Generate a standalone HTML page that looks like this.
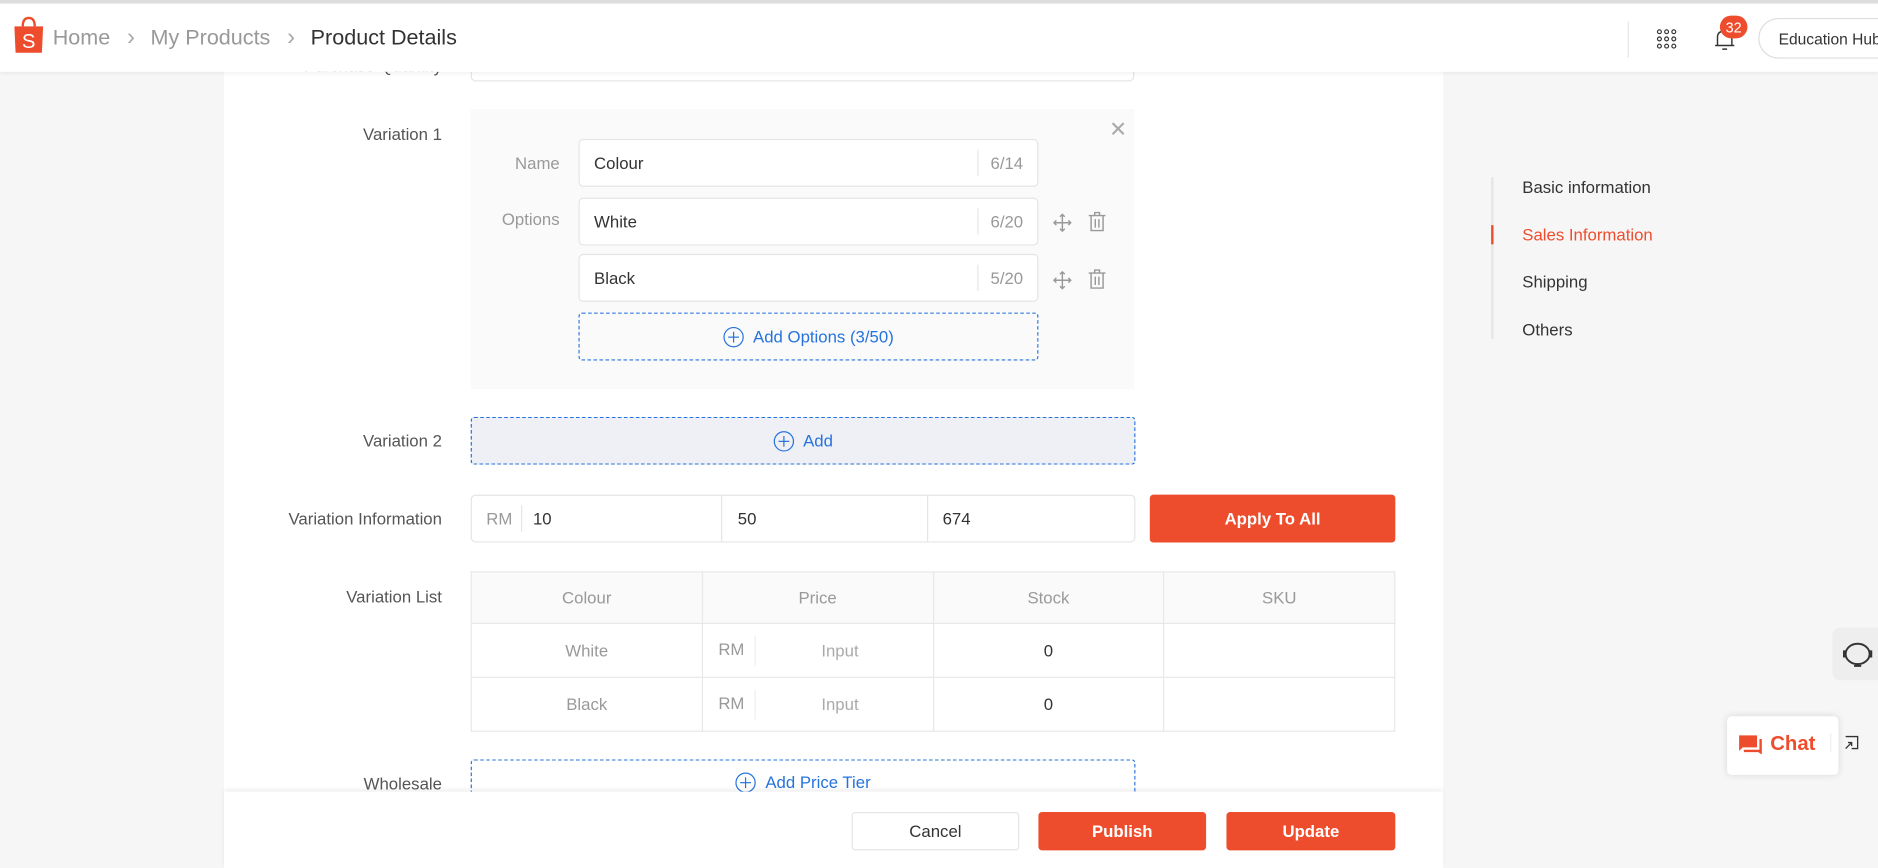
<!DOCTYPE html>
<html><head><meta charset="utf-8">
<style>
*{box-sizing:border-box;margin:0;padding:0}
html,body{width:1878px;height:868px;overflow:hidden;background:#f6f6f6;font-family:"Liberation Sans",sans-serif}
#s{position:absolute;left:0;top:0;width:1568px;height:725px;transform:scale(1.19770);transform-origin:0 0;background:#f6f6f6}
.a{position:absolute}
.lbl{position:absolute;right:1199px;font-size:14px;color:#555;text-align:right;white-space:nowrap}
.inp{position:absolute;background:#fff;border:1px solid #e5e5e5;border-radius:4px;font-size:14px;color:#333}
.dash{position:absolute;border:1px dashed #2673dd;border-radius:3px;color:#2673dd;font-size:14px;display:flex;align-items:center;justify-content:center;gap:8px}
.plus{width:17px;height:17px;border:1.3px solid #2673dd;border-radius:50%;position:relative}
.plus:before{content:"";position:absolute;left:3px;right:3px;top:7px;height:1.3px;background:#2673dd}
.plus:after{content:"";position:absolute;top:3px;bottom:3px;left:7px;width:1.3px;background:#2673dd}
.btn{position:absolute;border-radius:3px;font-size:14px;font-weight:bold;display:flex;align-items:center;justify-content:center;color:#fff;background:#ee4d2d}
td,th{border:1px solid #e8e8e8;font-weight:normal;font-size:14px;color:#999;text-align:center}
.sep{margin:0 13px 0 14px;color:#aaa;font-size:20px;line-height:18px}
</style></head><body><div id="s">
<div class="a" style="left:0;top:0;width:1568px;height:60px;background:#fff;border-top:3px solid #ddd;box-shadow:0 1px 4px rgba(0,0,0,.08);z-index:5">
 <svg class="a" style="left:12px;top:10px" width="24" height="32" viewBox="0 0 24 32"><path d="M7 9 Q7 2 12 2 Q17 2 17 9" fill="none" stroke="#ee4d2d" stroke-width="2"/><path d="M0 9 H24 L23 31 H1 Z" fill="#ee4d2d"/><text x="12" y="27" fill="#fff" font-size="17" text-anchor="middle" font-family="Liberation Sans">S</text></svg>
 <div class="a" style="left:44px;top:18px;font-size:18px;color:#999;white-space:nowrap">Home<span class="sep">›</span>My Products<span class="sep">›</span><span style="color:#333">Product Details</span></div>
 <div class="a" style="left:1359px;top:15px;width:1px;height:30px;background:#e5e5e5"></div>
 <svg class="a" style="left:1383px;top:21px" width="17" height="17"><g fill="none" stroke="#333" stroke-width="1"><circle cx="2.5" cy="2.5" r="1.6"/><circle cx="8.5" cy="2.5" r="1.6"/><circle cx="14.5" cy="2.5" r="1.6"/><circle cx="2.5" cy="8.5" r="1.6"/><circle cx="8.5" cy="8.5" r="1.6"/><circle cx="14.5" cy="8.5" r="1.6"/><circle cx="2.5" cy="14.5" r="1.6"/><circle cx="8.5" cy="14.5" r="1.6"/><circle cx="14.5" cy="14.5" r="1.6"/></g></svg>
 <svg class="a" style="left:1431px;top:20px" width="18" height="20"><path d="M3 15 V8 Q3 3 9 3 Q15 3 15 8 V15 H1 H17 M7 18 H11" fill="none" stroke="#333" stroke-width="1.2"/></svg>
 <div class="a" style="left:1436px;top:10px;height:19px;min-width:23px;border-radius:10px;background:#ee4d2d;color:#fff;font-size:12px;display:flex;align-items:center;justify-content:center;padding:0 4px">32</div>
 <div class="a" style="left:1468px;top:12px;width:130px;height:34px;border:1px solid #ddd;border-radius:17px;font-size:13px;color:#333;padding:9px 16px">Education Hub</div>
</div>
<div class="a" style="left:187px;top:0;width:1018px;height:725px;background:#fff"></div>
<div class="lbl" style="top:47px">Purchase Quantity</div>
<div class="inp" style="left:393px;top:30px;width:554px;height:38px"></div>

<div class="lbl" style="top:104px">Variation 1</div>
<div class="a" style="left:393px;top:91px;width:554px;height:234px;background:#fafafa"></div>
<div class="a" style="left:926px;top:98px;font-size:18px;color:#aaa">✕</div>
<div class="a" style="left:430px;top:128px;font-size:14px;color:#999">Name</div>
<div class="a" style="left:419px;top:175px;font-size:14px;color:#999">Options</div>
<div class="inp" style="left:483px;top:116px;width:384px;height:40px"><span class="a" style="left:12px;top:11px">Colour</span><span class="a" style="left:332px;top:8px;height:22px;border-left:1px solid #e5e5e5"></span><span class="a" style="left:343px;top:11px;color:#999">6/14</span></div>
<div class="inp" style="left:483px;top:165px;width:384px;height:40px"><span class="a" style="left:12px;top:11px">White</span><span class="a" style="left:332px;top:8px;height:22px;border-left:1px solid #e5e5e5"></span><span class="a" style="left:343px;top:11px;color:#999">6/20</span></div>
<div class="inp" style="left:483px;top:212px;width:384px;height:40px"><span class="a" style="left:12px;top:11px">Black</span><span class="a" style="left:332px;top:8px;height:22px;border-left:1px solid #e5e5e5"></span><span class="a" style="left:343px;top:11px;color:#999">5/20</span></div>
<svg class="a" style="left:879px;top:178px" width="16" height="16"><path d="M8 1V15M1 8H15M6 3L8 1L10 3M6 13L8 15L10 13M3 6L1 8L3 10M13 6L15 8L13 10" fill="none" stroke="#999" stroke-width="1.2"/></svg>
<svg class="a" style="left:879px;top:226px" width="16" height="16"><path d="M8 1V15M1 8H15M6 3L8 1L10 3M6 13L8 15L10 13M3 6L1 8L3 10M13 6L15 8L13 10" fill="none" stroke="#999" stroke-width="1.2"/></svg>
<svg class="a" style="left:908px;top:176px" width="16" height="18"><path d="M1 4H15M6 4V1.5H10V4M3 4V16.5H13V4M6.5 7V14M9.5 7V14" fill="none" stroke="#999" stroke-width="1.2"/></svg>
<svg class="a" style="left:908px;top:224px" width="16" height="18"><path d="M1 4H15M6 4V1.5H10V4M3 4V16.5H13V4M6.5 7V14M9.5 7V14" fill="none" stroke="#999" stroke-width="1.2"/></svg>
<div class="dash" style="left:483px;top:261px;width:384px;height:40px"><span class="plus"></span>Add Options (3/50)</div>

<div class="lbl" style="top:360px">Variation 2</div>
<div class="dash" style="left:393px;top:348px;width:555px;height:40px;background:#eef0f5"><span class="plus"></span>Add</div>

<div class="lbl" style="top:425px">Variation Information</div>
<div class="inp" style="left:393px;top:413px;width:555px;height:40px;font-size:14px">
 <span class="a" style="left:12px;top:11px;color:#999">RM</span><span class="a" style="left:41px;top:8px;height:22px;border-left:1px solid #e5e5e5"></span><span class="a" style="left:51px;top:11px">10</span>
 <span class="a" style="left:208px;top:0;height:38px;border-left:1px solid #e5e5e5"></span><span class="a" style="left:222px;top:11px">50</span>
 <span class="a" style="left:380px;top:0;height:38px;border-left:1px solid #e5e5e5"></span><span class="a" style="left:393px;top:11px">674</span>
</div>
<div class="btn" style="left:960px;top:413px;width:205px;height:40px">Apply To All</div>

<div class="lbl" style="top:490px">Variation List</div>
<table class="a" style="left:393px;top:477px;width:772px;border-collapse:collapse;table-layout:fixed">
<tr style="height:43px;background:#fafafa"><th>Colour</th><th>Price</th><th>Stock</th><th>SKU</th></tr>
<tr style="height:45px"><td>White</td><td style="position:relative"><span class="a" style="left:13px;top:13px">RM</span><span class="a" style="left:43px;top:10px;height:25px;border-left:1px solid #eee"></span><span class="a" style="left:99px;top:14px;color:#aaa">Input</span></td><td style="color:#333">0</td><td></td></tr>
<tr style="height:45px"><td>Black</td><td style="position:relative"><span class="a" style="left:13px;top:13px">RM</span><span class="a" style="left:43px;top:10px;height:25px;border-left:1px solid #eee"></span><span class="a" style="left:99px;top:14px;color:#aaa">Input</span></td><td style="color:#333">0</td><td></td></tr>
</table>

<div class="lbl" style="top:646px">Wholesale</div>
<div class="dash" style="left:393px;top:634px;width:555px;height:40px;align-items:flex-start;padding-top:10px"><span class="plus"></span>Add Price Tier</div>

<div class="a" style="left:187px;top:661px;width:1018px;height:64px;background:#fff;box-shadow:0 -2px 4px rgba(0,0,0,.08)"></div>
<div class="btn" style="left:711px;top:678px;width:140px;height:32px;background:#fff;color:#333;border:1px solid #e5e5e5;font-weight:normal">Cancel</div>
<div class="btn" style="left:867px;top:678px;width:140px;height:32px">Publish</div>
<div class="btn" style="left:1024px;top:678px;width:141px;height:32px">Update</div>

<div class="a" style="left:1245px;top:148px;width:2px;height:135px;background:#e5e5e5"></div>
<div class="a" style="left:1245px;top:188px;width:2px;height:16px;background:#ee4d2d"></div>
<div class="a" style="left:1271px;top:148px;font-size:14px;color:#333">Basic information</div>
<div class="a" style="left:1271px;top:188px;font-size:14px;color:#ee4d2d">Sales Information</div>
<div class="a" style="left:1271px;top:227px;font-size:14px;color:#333">Shipping</div>
<div class="a" style="left:1271px;top:267px;font-size:14px;color:#333">Others</div>

<div class="a" style="left:1530px;top:524px;width:45px;height:44px;background:#eee;border-radius:6px"></div>
<svg class="a" style="left:1537px;top:535px" width="28" height="24"><ellipse cx="14" cy="11" rx="10" ry="8.5" fill="none" stroke="#333" stroke-width="1.6"/><path d="M3 8v6M25 8v6" stroke="#333" stroke-width="2.4"/><path d="M11 21h6" stroke="#333" stroke-width="1.6"/></svg>
<div class="a" style="left:1442px;top:598px;width:93px;height:49px;background:#fff;border-radius:4px;box-shadow:0 0 6px rgba(0,0,0,.12)"></div>
<svg class="a" style="left:1452px;top:613px" width="20" height="18"><path d="M0 1H15V11H3L0 14Z" fill="#ee4d2d"/><path d="M4 13H17V4H19V17L16 15H4Z" fill="#ee4d2d"/></svg>
<div class="a" style="left:1478px;top:611px;font-size:17px;font-weight:bold;color:#ee4d2d">Chat</div>
<div class="a" style="left:1528px;top:612px;height:16px;border-left:1px solid #eee"></div>
<svg class="a" style="left:1540px;top:614px" width="12" height="12"><path d="M1 1H11V11H6M1 11L6 6M3 6H6V9" fill="none" stroke="#333" stroke-width="1.1"/></svg>
</div></body></html>
